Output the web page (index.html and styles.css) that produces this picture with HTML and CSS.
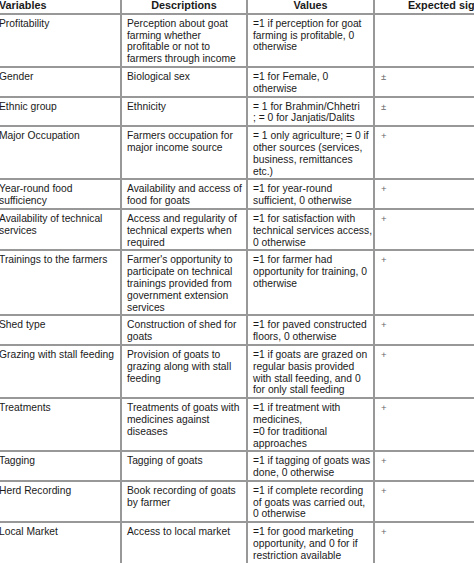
FILE: index.html
```html
<!DOCTYPE html>
<html>
<head>
<meta charset="utf-8">
<link rel="stylesheet" href="styles.css">
</head>
<body>
<table class="vt">
  <colgroup>
    <col class="c1"><col class="c2"><col class="c3"><col class="c4">
  </colgroup>
  <thead>
    <tr>
      <th class="left">Variables</th>
      <th>Descriptions</th>
      <th>Values</th>
      <th>Expected sign</th>
    </tr>
  </thead>
  <tbody>
    <tr><td>Profitability</td><td>Perception about goat<br>farming whether<br>profitable or not to<br>farmers through income</td><td>=1 if perception for goat<br>farming is profitable, 0<br>otherwise</td><td class="sg"></td></tr>
    <tr><td>Gender</td><td>Biological sex</td><td>=1 for Female, 0<br>otherwise</td><td class="sg">±</td></tr>
    <tr><td>Ethnic group</td><td>Ethnicity</td><td>= 1 for Brahmin/Chhetri<br>; = 0 for Janjatis/Dalits</td><td class="sg">±</td></tr>
    <tr><td>Major Occupation</td><td>Farmers occupation for<br>major income source</td><td>= 1 only agriculture; = 0 if<br>other sources (services,<br>business, remittances<br>etc.)</td><td class="sg">+</td></tr>
    <tr><td>Year-round food<br>sufficiency</td><td>Availability and access of<br>food for goats</td><td>=1 for year-round<br>sufficient, 0 otherwise</td><td class="sg">+</td></tr>
    <tr><td>Availability of technical<br>services</td><td>Access and regularity of<br>technical experts when<br>required</td><td>=1 for satisfaction with<br>technical services access,<br>0 otherwise</td><td class="sg">+</td></tr>
    <tr><td>Trainings to the farmers</td><td>Farmer's opportunity to<br>participate on technical<br>trainings provided from<br>government extension<br>services</td><td>=1 for farmer had<br>opportunity for training, 0<br>otherwise</td><td class="sg">+</td></tr>
    <tr><td>Shed type</td><td>Construction of shed for<br>goats</td><td>=1 for paved constructed<br>floors, 0 otherwise</td><td class="sg">+</td></tr>
    <tr><td>Grazing with stall feeding</td><td>Provision of goats to<br>grazing along with stall<br>feeding</td><td>=1 if goats are grazed on<br>regular basis provided<br>with stall feeding, and 0<br>for only stall feeding</td><td class="sg">+</td></tr>
    <tr><td>Treatments</td><td>Treatments of goats with<br>medicines against<br>diseases</td><td>=1 if treatment with<br>medicines,<br>=0 for traditional<br>approaches</td><td class="sg">+</td></tr>
    <tr><td>Tagging</td><td>Tagging of goats</td><td>=1 if tagging of goats was<br>done, 0 otherwise</td><td class="sg">+</td></tr>
    <tr><td>Herd Recording</td><td>Book recording of goats<br>by farmer</td><td>=1 if complete recording<br>of goats was carried out,<br>0 otherwise</td><td class="sg">+</td></tr>
    <tr><td>Local Market</td><td>Access to local market</td><td>=1 for good marketing<br>opportunity, and 0 for if<br>restriction available</td><td class="sg">+</td></tr>
  </tbody>
</table>
</body>
</html>
```
FILE: styles.css
```css
html, body {
  margin: 0;
  padding: 0;
  background: #fff;
  overflow: hidden;
}
body {
  font-family: "Liberation Sans", Arial, sans-serif;
  font-size: 10.3px;
  color: #1a1a1a;
}
.vt {
  border-collapse: collapse;
  table-layout: fixed;
  width: 520px;
  margin: -3px 0 0 -6px;
}
.c1 { width: 127px; }
.c2 { width: 126px; }
.c3 { width: 127px; }
.c4 { width: 140px; }
.vt th {
  font-weight: 700;
  font-size: 10.8px;
  line-height: 11.8px;
  padding: 3px 5px 1px;
  text-align: center;
  white-space: nowrap;
  border-left: 2px solid #989898;
  border-bottom: 2px solid #989898;
}
.vt th.left {
  text-align: left;
  border-left: none;
}
.vt td {
  line-height: 11.8px;
  padding: 3px 5px 1px;
  vertical-align: top;
  white-space: nowrap;
  border: 2px solid #989898;
}
.vt td:first-child {
  border-left: none;
}
.vt td.sg {
  color: #666;
  font-size: 9.5px;
  padding-left: 6px;
}
```
